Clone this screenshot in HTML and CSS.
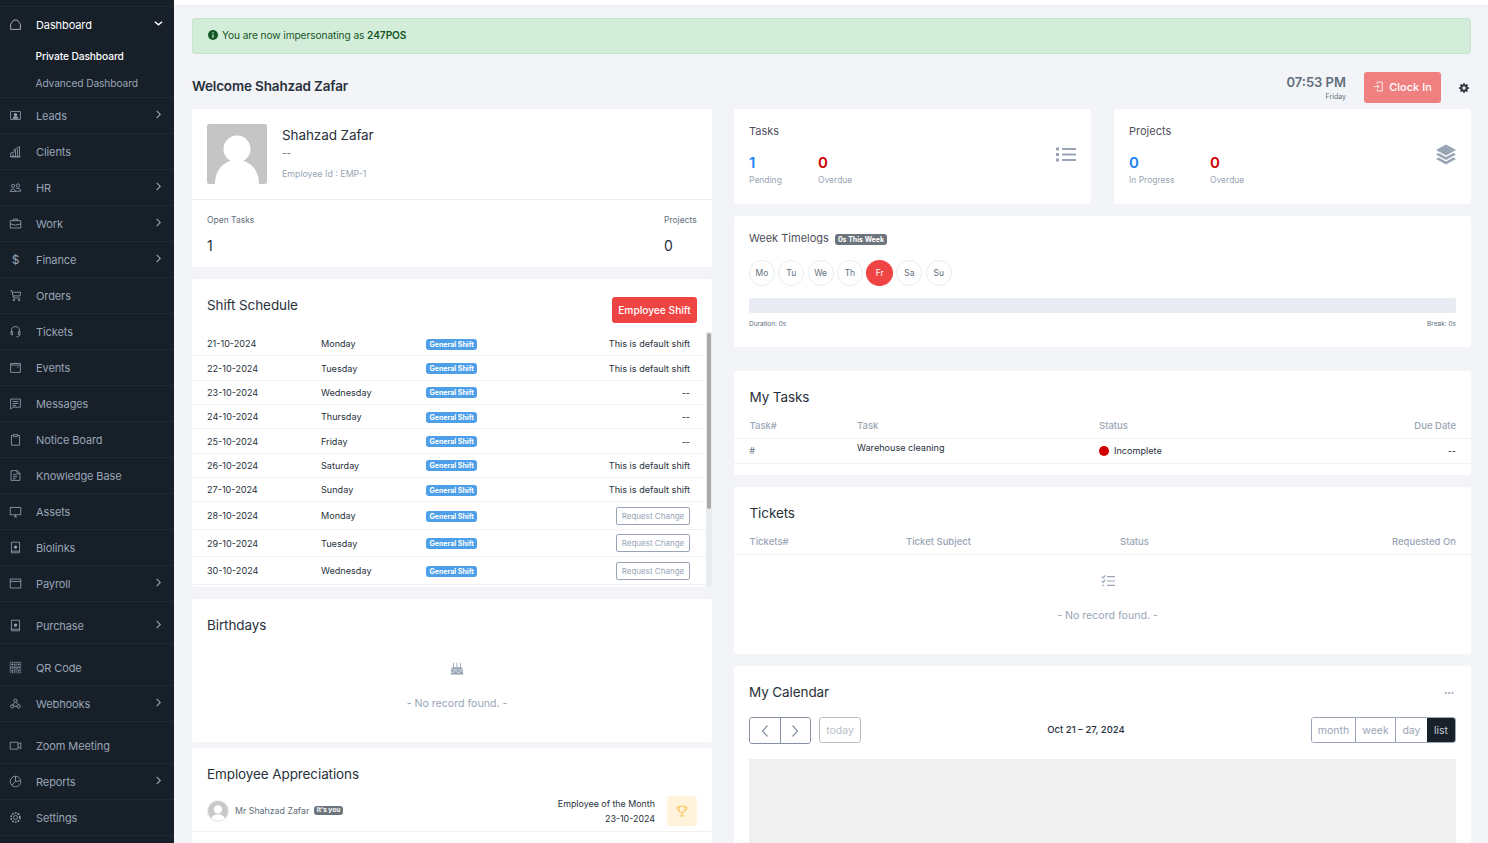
FILE: index.html
```html
<!DOCTYPE html>
<html lang="en">
<head>
<meta charset="utf-8">
<title>Private Dashboard</title>
<link rel="stylesheet" href="styles.css">
</head>
<body>
<div class="app">
  <aside class="sidebar">
    <div class="nav-group">
      <div class="nav-item active"><svg class="ico" viewBox="0 0 16 16"><path d="M2 14V7.500L6 2.500h4l4 5V14H2z"/></svg><span class="nav-label">Dashboard</span><svg class="chev" viewBox="0 0 10 10"><path d="M1 3l4 3.500L9 3"/></svg></div>
      <div class="sub strong">Private Dashboard</div>
      <div class="sub">Advanced Dashboard</div>
    </div>
    <div class="nav-item"><svg class="ico" viewBox="0 0 16 16"><path d="M2 3h12v10H2z"/><circle class="fill" cx="8" cy="7" r="2"/><path class="fill" d="M4.500 12c0-4 7-4 7 0z"/></svg><span class="nav-label">Leads</span><svg class="chev" viewBox="0 0 10 10"><path d="M3 1l4 4-4 4"/></svg></div>
    <div class="nav-item"><svg class="ico" viewBox="0 0 16 16"><path d="M2 14.500V10l4-1V6l7-4v12.500zM2 14.500h12M5 11v3M8 6v8M10.500 5v9"/></svg><span class="nav-label">Clients</span></div>
    <div class="nav-item"><svg class="ico" viewBox="0 0 16 16"><circle cx="5" cy="6" r="2"/><circle cx="11" cy="5.500" r="2"/><path d="M1.500 13c0-4 6.500-4 6.500 0zM8 12.500h6.500c0-3.500-4-4-6-3"/></svg><span class="nav-label">HR</span><svg class="chev" viewBox="0 0 10 10"><path d="M3 1l4 4-4 4"/></svg></div>
    <div class="nav-item"><svg class="ico" viewBox="0 0 16 16"><path d="M1.500 4.500h13v9h-13zM5.500 4.500V2.500h5v2M1.500 8.500L8 10l6.500-1.500"/></svg><span class="nav-label">Work</span><svg class="chev" viewBox="0 0 10 10"><path d="M3 1l4 4-4 4"/></svg></div>
    <div class="nav-item"><span class="ico-text">$</span><span class="nav-label">Finance</span><svg class="chev" viewBox="0 0 10 10"><path d="M3 1l4 4-4 4"/></svg></div>
    <div class="nav-item"><svg class="ico" viewBox="0 0 16 16"><path d="M1.500 2h2l2 9h8M4 4h10.500l-1 4.500H5"/><circle cx="6" cy="13.500" r="1"/><circle cx="12.500" cy="13.500" r="1"/></svg><span class="nav-label">Orders</span></div>
    <div class="nav-item"><svg class="ico" viewBox="0 0 16 16"><path d="M3 9V7a5 5 0 0 1 10 0v2M2.500 8h2v4h-2zM11.500 8h2v4h-2zM13 12c0 2-2 2.500-4 2.500"/></svg><span class="nav-label">Tickets</span></div>
    <div class="nav-item"><svg class="ico" viewBox="0 0 16 16"><path d="M2 3h12v11H2zM2 5h12"/><circle class="fill" cx="11" cy="7.500" r=".8"/></svg><span class="nav-label">Events</span></div>
    <div class="nav-item"><svg class="ico" viewBox="0 0 16 16"><path d="M2 2.500h12v10H4.500L2 15zM4.500 5.500h7M4.500 8h7M4.500 10.500h4"/></svg><span class="nav-label">Messages</span></div>
    <div class="nav-item"><svg class="ico" viewBox="0 0 16 16"><path d="M5.500 3H3v12h10V3h-2.500M5.500 2h5v2.500h-5z"/></svg><span class="nav-label">Notice Board</span></div>
    <div class="nav-item"><svg class="ico" viewBox="0 0 16 16"><path d="M2.500 2h7.500l3.500 3.500V14h-11zM10 2v3.500h3.500M5 7h5M5 9.500h5M5 12h3"/></svg><span class="nav-label">Knowledge Base</span></div>
    <div class="nav-item"><svg class="ico" viewBox="0 0 16 16"><path d="M1.500 3h13v9h-13zM6 14.500h4M8 12v2.500"/></svg><span class="nav-label">Assets</span></div>
    <div class="nav-item"><svg class="ico" viewBox="0 0 16 16"><path d="M3 1.500h10v13H3zM3 12.500h10"/><circle class="fill" cx="8" cy="7.500" r="2"/></svg><span class="nav-label">Biolinks</span></div>
    <div class="nav-item"><svg class="ico" viewBox="0 0 16 16"><path d="M1.500 2.500h13v11h-13zM1.500 5.500h13"/></svg><span class="nav-label">Payroll</span><svg class="chev" viewBox="0 0 10 10"><path d="M3 1l4 4-4 4"/></svg></div>
    <div class="nav-item tall"><svg class="ico" viewBox="0 0 16 16"><path d="M3 1.500h10v13H3zM3 12.500h10"/><circle class="fill" cx="8" cy="7.500" r="2"/></svg><span class="nav-label">Purchase</span><svg class="chev" viewBox="0 0 10 10"><path d="M3 1l4 4-4 4"/></svg></div>
    <div class="nav-item tall"><svg class="ico" viewBox="0 0 16 16"><path class="qr" d="M1.500 1.500h5v5h-5zM9.500 1.500h5v5h-5zM1.500 9.500h5v5h-5zM9.500 9.500h5v5h-5zM7.500 1v14M1 8h14"/><path class="fill" d="M3 3h2v2H3zM11 3h2v2h-2zM3 11h2v2H3zM11 11h2v2h-2z"/></svg><span class="nav-label">QR Code</span></div>
    <div class="nav-item"><svg class="ico" viewBox="0 0 16 16"><circle cx="8" cy="4.500" r="2"/><circle cx="4" cy="11.500" r="2"/><circle cx="12" cy="11.500" r="2"/><path d="M7 6.500l-2.500 4M6 11.500h4M9 6.500l2.500 3"/></svg><span class="nav-label">Webhooks</span><svg class="chev" viewBox="0 0 10 10"><path d="M3 1l4 4-4 4"/></svg></div>
    <div class="nav-item tall"><svg class="ico" viewBox="0 0 16 16"><path d="M1.500 4h9.500v8.500H1.500zM11 7l3.500-2.500v7.500L11 9.500"/></svg><span class="nav-label">Zoom Meeting</span></div>
    <div class="nav-item"><svg class="ico" viewBox="0 0 16 16"><circle cx="8" cy="8" r="6.500"/><path d="M8 1.500V8l5.500-1M8 8l-4.500 4.500"/></svg><span class="nav-label">Reports</span><svg class="chev" viewBox="0 0 10 10"><path d="M3 1l4 4-4 4"/></svg></div>
    <div class="nav-item"><svg class="ico" viewBox="0 0 16 16"><circle cx="8" cy="8" r="2.500"/><circle class="dash" cx="8" cy="8" r="5.500"/></svg><span class="nav-label">Settings</span></div>
  </aside>

  <div class="content">
    <div class="topbar"></div>
    <main class="page">
      <div class="alert"><svg class="alert-ico" viewBox="0 0 16 16"><circle cx="8" cy="8" r="8"/><path d="M7 7h2v5.500H7zM7 3.500h2v2H7z"/></svg><span>You are now impersonating as <b>247POS</b></span></div>

      <div class="head">
        <h1 class="welcome">Welcome Shahzad Zafar</h1>
        <div class="clock"><div class="time">07:53 PM</div><div class="day">Friday</div></div>
        <button class="clock-btn"><svg viewBox="0 0 16 16"><path d="M6 4V1.500h7.500v13H6V12M1 8h7.500M6 5.500L8.800 8 6 10.500"/></svg>Clock In</button>
        <svg class="gear" viewBox="0 0 16 16"><path d="M7 0h2l.5 2.300 1.500.6 2-1.300 1.400 1.400-1.300 2 .6 1.500L16 7v2l-2.300.5-.6 1.500 1.300 2-1.400 1.400-2-1.300-1.500.6L9 16H7l-.5-2.300-1.500-.6-2 1.300-1.400-1.400 1.300-2-.6-1.500L0 9V7l2.300-.5.600-1.500-1.300-2L3 1.600l2 1.300 1.500-.6zM8 5.300a2.700 2.700 0 1 0 0 5.400 2.700 2.700 0 0 0 0-5.400z" fill-rule="evenodd"/></svg>
      </div>

      <div class="cols">
        <div class="col-left">
          <section class="card profile">
            <div class="profile-top">
              <div class="avatar"><svg viewBox="0 0 60 60"><circle cx="30" cy="25" r="13.500"/><path d="M8 60c0-32 44-32 44 0z"/></svg></div>
              <div class="profile-info">
                <div class="pname">Shahzad Zafar</div>
                <div class="pdash">--</div>
                <div class="pid">Employee Id : EMP-1</div>
              </div>
            </div>
            <div class="profile-stats">
              <div><div class="stat-label">Open Tasks</div><div class="stat-num">1</div></div>
              <div class="stat-right"><div class="stat-label">Projects</div><div class="stat-num">0</div></div>
            </div>
          </section>

          <section class="card shift">
            <div class="shift-head"><h3 class="card-title">Shift Schedule</h3><button class="btn-red">Employee Shift</button></div>
            <div class="shift-body">
              <div class="shift-rows">
                <div class="srow"><span>21-10-2024</span><span>Monday</span><span><i class="badge">General Shift</i></span><span class="sr">This is default shift</span></div>
                <div class="srow"><span>22-10-2024</span><span>Tuesday</span><span><i class="badge">General Shift</i></span><span class="sr">This is default shift</span></div>
                <div class="srow"><span>23-10-2024</span><span>Wednesday</span><span><i class="badge">General Shift</i></span><span class="sr">--</span></div>
                <div class="srow"><span>24-10-2024</span><span>Thursday</span><span><i class="badge">General Shift</i></span><span class="sr">--</span></div>
                <div class="srow"><span>25-10-2024</span><span>Friday</span><span><i class="badge">General Shift</i></span><span class="sr">--</span></div>
                <div class="srow"><span>26-10-2024</span><span>Saturday</span><span><i class="badge">General Shift</i></span><span class="sr">This is default shift</span></div>
                <div class="srow"><span>27-10-2024</span><span>Sunday</span><span><i class="badge">General Shift</i></span><span class="sr">This is default shift</span></div>
                <div class="srow tallrow"><span>28-10-2024</span><span>Monday</span><span><i class="badge">General Shift</i></span><span class="sr"><button class="req">Request Change</button></span></div>
                <div class="srow tallrow"><span>29-10-2024</span><span>Tuesday</span><span><i class="badge">General Shift</i></span><span class="sr"><button class="req">Request Change</button></span></div>
                <div class="srow tallrow"><span>30-10-2024</span><span>Wednesday</span><span><i class="badge">General Shift</i></span><span class="sr"><button class="req">Request Change</button></span></div>
              </div>
              <div class="track"><div class="thumb"></div></div>
            </div>
          </section>

          <section class="card birthdays">
            <h3 class="card-title">Birthdays</h3>
            <div class="empty">
              <svg class="empty-ico cake" viewBox="0 0 16 16"><path d="M1 9.500h14v6H1z"/><path d="M3.500 2h1v5h-1zM7.500 2h1v5h-1zM11.500 2h1v5h-1zM2 7h12v2H2z"/><path class="wave" d="M1 12c1.500 1.500 2.300 1.500 3.500 0s2.300-1.500 3.500 0 2.300 1.500 3.500 0 2.300-1.500 3.500 0"/></svg>
              <div class="empty-text">- No record found. -</div>
            </div>
          </section>

          <section class="card apprec">
            <h3 class="card-title">Employee Appreciations</h3>
            <div class="apprec-row">
              <div class="mini"><svg viewBox="0 0 24 24"><circle cx="12" cy="10" r="5"/><path d="M3 24c0-11 18-11 18 0z"/></svg></div>
              <span class="apprec-name">Mr Shahzad Zafar</span>
              <i class="badge-dark">It's you</i>
              <div class="apprec-right"><div>Employee of the Month</div><div>23-10-2024</div></div>
              <div class="trophy"><svg viewBox="0 0 16 16"><path d="M4 1.500h8V6a4 4 0 0 1-8 0zM4 3H1.500c0 3 1 4.500 3 5M12 3h2.500c0 3-1 4.500-3 5M8 10v3M5 14.500h6"/></svg></div>
            </div>
          </section>
        </div>

        <div class="col-right">
          <div class="stats-grid">
            <section class="card mini-card">
              <div class="mini-main">
                <div class="mini-title">Tasks</div>
                <div class="mini-nums">
                  <div class="num-a"><div class="num blue">1</div><div class="num-label">Pending</div></div>
                  <div><div class="num red">0</div><div class="num-label">Overdue</div></div>
                </div>
              </div>
              <svg class="mini-ico" viewBox="0 0 20 16"><path d="M0 1h3v3H0zM6 1.500h14v2H6zM0 6.500h3v3H0zM6 7h14v2H6zM0 12h3v3H0zM6 12.500h14v2H6z"/></svg>
            </section>
            <section class="card mini-card">
              <div class="mini-main">
                <div class="mini-title">Projects</div>
                <div class="mini-nums">
                  <div class="num-b"><div class="num blue">0</div><div class="num-label">In Progress</div></div>
                  <div><div class="num red">0</div><div class="num-label">Overdue</div></div>
                </div>
              </div>
              <svg class="mini-ico" viewBox="0 0 20 20"><path d="M10 0l10 5.500-10 5.500L0 5.500z"/><path d="M2.500 8.500L10 12.500l7.500-4L20 10l-10 5.500L0 10z"/><path d="M2.500 13L10 17l7.500-4L20 14.500 10 20 0 14.500z"/></svg>
            </section>
          </div>

          <section class="card week">
            <div class="week-title"><span>Week Timelogs</span><i class="badge-dark big">0s This Week</i></div>
            <div class="days">
              <span class="dayc">Mo</span><span class="dayc">Tu</span><span class="dayc">We</span><span class="dayc">Th</span><span class="dayc on">Fr</span><span class="dayc">Sa</span><span class="dayc">Su</span>
            </div>
            <div class="bar"></div>
            <div class="bar-labels"><span>Duration: 0s</span><span>Break: 0s</span></div>
          </section>

          <section class="card tasks">
            <h3 class="card-title">My Tasks</h3>
            <div class="thead tcols"><span>Task#</span><span>Task</span><span>Status</span><span class="sr">Due Date</span></div>
            <div class="trow tcols"><span class="muted">#</span><span class="up">Warehouse cleaning</span><span class="status"><i class="dot"></i>Incomplete</span><span class="sr">--</span></div>
          </section>

          <section class="card tickets">
            <h3 class="card-title">Tickets</h3>
            <div class="thead kcols"><span>Tickets#</span><span>Ticket Subject</span><span>Status</span><span class="sr">Requested On</span></div>
            <div class="empty tight">
              <svg class="empty-ico list" viewBox="0 0 16 16"><path d="M1 3l1.500 1.500L5 1.500M1 8l1.500 1.500L5 6.500M7 3h9M7 8h9M7 13h9M1.500 13h2"/></svg>
              <div class="empty-text">- No record found. -</div>
            </div>
          </section>

          <section class="card calendar">
            <div class="cal-head"><h3 class="card-title">My Calendar</h3><span class="dots">•••</span></div>
            <div class="cal-bar">
              <div class="cal-left">
                <div class="navbtns"><button><svg viewBox="0 0 10 14"><path d="M7.500 1.500L2.500 7l5 5.500"/></svg></button><button><svg viewBox="0 0 10 14"><path d="M2.500 1.500L7.500 7l-5 5.500"/></svg></button></div>
                <button class="today">today</button>
              </div>
              <div class="cal-range">Oct 21 – 27, 2024</div>
              <div class="views"><button>month</button><button>week</button><button>day</button><button class="sel">list</button></div>
            </div>
            <div class="cal-body"></div>
          </section>
        </div>
      </div>
    </main>
  </div>
</div>
</body>
</html>
```

FILE: styles.css
```css
* { box-sizing: border-box; }
html, body { margin: 0; height: 100%; overflow: hidden; }
body { font-family: Inter, "Liberation Sans", sans-serif; background: #f2f4f7; color: #28313c; font-size: 12px; }
button { font-family: inherit; cursor: pointer; }
h1, h3 { margin: 0; font-weight: 400; }
.app { display: flex; height: 843px; overflow: hidden; }

/* sidebar */
.sidebar { width: 174px; flex: none; background: #171f29; padding-top: 6px; }
.nav-group { border-top: 1px solid #1f2935; border-bottom: 1px solid #1f2935; height: 92px; }
.nav-item { display: flex; align-items: center; height: 36px; padding: 0 11px 0 9px; border-bottom: 1px solid #1f2935; color: #99a5b5; font-size: 11px; letter-spacing: -.1px; }
.nav-item.tall { height: 42px; padding-top: 6px; }
.nav-item.active { color: #fff; border-bottom: 0; height: 35px; }
.ico { width: 13px; height: 13px; flex: none; fill: none; stroke: #99a5b5; stroke-width: 1; margin-right: 14px; }
.ico .fill { fill: #99a5b5; stroke: none; }
.ico .qr { stroke-dasharray: 1.5 .8; }
.ico .dash { stroke-width: 2; stroke-dasharray: 2 1.500; }
.active .ico { stroke: #c5ccd6; }
.ico-text { width: 13px; margin-right: 14px; text-align: center; font-size: 12px; flex: none; }
.nav-label { flex: 1; }
.chev { width: 9px; height: 9px; fill: none; stroke: #99a5b5; stroke-width: 1.200; flex: none; position: relative; top: -1px; }
.active .chev { stroke: #fff; stroke-width: 1.600; }
.sub { height: 27px; padding-left: 35.500px; display: flex; align-items: center; font-size: 10.200px; letter-spacing: -.1px; color: #99a5b5; }
.sub.strong { color: #fff; font-weight: 500; }

/* main */
.content { flex: 1; min-width: 0; }
.topbar { height: 6px; background: #fff; border-bottom: 1px solid #e8eef3; }
.page { padding: 12px 17px 0 18px; }
.alert { height: 36px; display: flex; align-items: center; gap: 4px; padding: 0 0 2px 15px; background: #d4edda; border: 1px solid #c3e6cb; border-radius: 3px; color: #155724; font-size: 10.200px; letter-spacing: -.1px; }
.alert b { font-weight: 600; }
.alert-ico { width: 10px; height: 10px; fill: #155724; fill-rule: evenodd; }
.alert-ico path { fill: #d4edda; }
.head { display: flex; align-items: center; height: 31px; margin: 18px 0 6px; }
.welcome { flex: 1; font-size: 13.500px; font-weight: 600; letter-spacing: -.15px; position: relative; top: -2px; color: #28313c; }
.clock { text-align: right; margin-right: 18px; position: relative; top: -1px; }
.time { font-size: 13px; font-weight: 600; color: #616e7c; line-height: 20px; }
.day { font-size: 7px; color: #616e7c; line-height: 10px; }
.clock-btn { width: 77px; height: 31px; border: 0; border-radius: 3px; background: #f08080; color: #fff; font-size: 11px; font-weight: 500; display: flex; align-items: center; justify-content: center; gap: 5px; padding: 0 0 2px; }
.clock-btn svg { width: 11px; height: 11px; fill: none; stroke: #fff; stroke-width: 1.200; }
.gear { width: 10px; height: 10px; fill: #28313c; margin: 0 2px 0 18px; }

.cols { display: grid; grid-template-columns: 520px 737px; column-gap: 22px; }
.card { background: #fff; border-radius: 3px; }
.card-title { font-size: 13.500px; letter-spacing: -.1px; color: #28313c; line-height: 18px; }
.col-left .card, .col-right > .card, .stats-grid { margin-bottom: 12px; }
.col-right > .week.card { margin-bottom: 24px; }
.birthdays.card { margin-bottom: 6px; }

/* profile */
.profile-top { display: flex; padding: 15px; height: 91px; border-bottom: 1px solid #e8eef3; }
.avatar { width: 60px; height: 60px; background: #c5c5c5; border-radius: 2px; overflow: hidden; margin-right: 15px; }
.avatar svg { display: block; fill: #fff; }
.pname { font-size: 13.500px; letter-spacing: -.1px; line-height: 18px; margin-top: 2px; }
.pdash { font-size: 10px; line-height: 14px; color: #616e7c; margin-top: 2px; }
.pid { font-size: 8.800px; line-height: 12px; color: #99a5b5; margin-top: 8px; }
.profile-stats { height: 67px; display: flex; justify-content: space-between; padding: 15px; }
.stat-label { font-size: 8.500px; color: #616e7c; line-height: 10px; }
.stat-num { font-size: 14px; line-height: 18px; margin-top: 12px; }
.stat-right { width: 33px; }

/* shift */
.shift { height: 308px; overflow: hidden; }
.shift-head { display: flex; justify-content: space-between; height: 53px; padding: 17px 15px 0; }
.btn-red { width: 85px; height: 26px; margin-top: 1px; border: 0; border-radius: 3px; background: #ef4444; color: #fff; font-size: 10.200px; font-weight: 500; padding: 0; }
.shift-body { display: flex; height: 255px; }
.shift-rows { flex: 1; min-width: 0; }
.srow { display: grid; grid-template-columns: 114px 105px 1fr auto; align-items: center; height: 24.350px; padding: 0 15.500px 0 15px; border-bottom: 1px solid #f1f1f1; font-size: 9.100px; color: #28313c; }
.srow.tallrow { height: 27.500px; }
.sr { text-align: right; }
.badge { display: inline-block; font-style: normal; font-weight: 700; font-size: 7px; line-height: 11px; color: #fff; background: #4d9fe8; border-radius: 3px; padding: 0 3.500px; vertical-align: middle; }
.req { height: 18px; width: 74px; padding: 0; border: 1px solid #99a5b5; border-radius: 2px; background: #fff; color: #99a5b5; font-size: 8px; display: block; margin-left: auto; }
.track { width: 6.500px; background: #e9ecef; padding: 1px 1.500px; height: 100%; }
.thumb { height: 176px; background: #a9a9a9; border-radius: 2px; }

/* birthdays */
.birthdays { height: 143px; padding: 17px 15px 0; }
.empty { text-align: center; padding: 26px 0 0 10px; }
.empty-ico { display: block; margin: 0 auto; width: 14px; height: 16px; }
.cake { fill: #99a5b5; }
.cake .wave { fill: none; stroke: #fff; stroke-width: .8; }
.empty-text { color: #99a5b5; font-size: 10.600px; margin-top: 21px; line-height: 14px; }

/* appreciations */
.apprec { padding: 17px 15px 0; height: 110px; }
.apprec-row { display: flex; align-items: center; height: 42px; margin: 7px -15px 0; padding: 0 15px; border-bottom: 1px solid #f1f1f1; }
.mini { width: 22px; height: 22px; border-radius: 50%; background: #c8c8c8; border: 1px solid #eee; overflow: hidden; flex: none; margin-right: 6px; }
.mini svg { display: block; fill: #fff; }
.apprec-name { font-size: 8.800px; color: #616e7c; }
.badge-dark { display: inline-block; margin-left: 5px; font-style: normal; font-weight: 700; font-size: 6.500px; line-height: 9px; color: #fff; background: #6c757d; border-radius: 3px; padding: 0 2.500px; }
.apprec-right { margin-left: auto; text-align: right; font-size: 8.900px; color: #28313c; line-height: 15px; }
.trophy { width: 30px; height: 30px; margin-left: 12px; background: #fff3dc; border-radius: 3px; display: flex; align-items: center; justify-content: center; }
.trophy svg { width: 12px; height: 12px; fill: none; stroke: #fcbd4a; stroke-width: 1.200; }

/* right */
.stats-grid { display: grid; grid-template-columns: 357px 357px; column-gap: 23px; }
.mini-card { height: 95px; display: flex; justify-content: space-between; padding: 15px; }
.mini-title { font-size: 11px; line-height: 14px; color: #4d4f5c; }
.mini-nums { display: flex; margin-top: 15px; }
.num-a { width: 69px; }
.num-b { width: 81px; }
.num { font-size: 15px; font-weight: 600; line-height: 20px; }
.num.blue { color: #1d82f5; }
.num.red { color: #d30000; }
.num-label { font-size: 8.500px; color: #99a5b5; line-height: 12px; margin-top: 1px; }
.mini-ico { width: 20px; height: 21px; fill: #99a5b5; margin-top: 20px; }

.week { height: 131px; padding: 15px; }
.week-title { display: flex; align-items: center; font-size: 11px; line-height: 14px; color: #4d4f5c; }
.badge-dark.big { font-size: 7px; line-height: 11px; padding: 0 3px; margin-left: 6px; position: relative; top: 1px; }
.days { display: flex; gap: 3.300px; margin-top: 15px; }
.dayc { width: 26px; height: 26px; border-radius: 50%; border: 1px solid #e8eef3; display: flex; align-items: center; justify-content: center; font-size: 8.500px; color: #616e7c; flex: none; }
.dayc.on { background: #ef4444; border-color: #ef4444; color: #fff; width: 27px; }
.bar { height: 15px; margin-top: 12px; background: #e8ecf2; border-radius: 2px; }
.bar-labels { display: flex; justify-content: space-between; font-size: 6.500px; color: #616e7c; margin-top: 6px; line-height: 10px; }

.tasks { height: 104px; padding: 17px 0 0; }
.tasks .card-title, .tickets .card-title, .cal-head .card-title { padding-left: 15.500px; }
.thead { height: 27px; margin-top: 6px; display: grid; align-items: center; padding: 0 15px 0 15.500px; font-size: 9.500px; color: #99a5b5; border-bottom: 1px solid #f1f1f1; font-weight: 500; }
.trow { display: grid; align-items: center; height: 25px; padding: 0 15px 1px 15.500px; border-bottom: 1px solid #f1f1f1; font-size: 9.100px; color: #28313c; }
.muted { color: #616e7c; font-size: 8.500px; }
.tcols { grid-template-columns: 107.500px 242px 1fr 100px; }
.up { position: relative; top: -3px; }
.status { display: flex; align-items: center; gap: 5px; }
.dot { width: 10px; height: 10px; border-radius: 50%; background: #d30000; }

.tickets { height: 167px; padding: 17px 0 0; }
.kcols { grid-template-columns: 156.500px 214px 1fr 100px; }
.empty.tight { padding-top: 19px; }
.empty-ico.list { width: 16px; height: 14px; fill: none; stroke: #99a5b5; stroke-width: 1.300; }
.empty.tight .empty-text { margin-top: 21px; }

.calendar { padding: 17px 15px 0; height: 200px; }
.cal-head { display: flex; justify-content: space-between; align-items: center; margin-left: -15.500px; }
.dots { font-size: 6px; color: #7f8b9b; margin-right: 2px; }
.cal-bar { display: flex; justify-content: space-between; align-items: flex-start; margin-top: 16px; }
.cal-left { display: flex; gap: 8px; }
.navbtns { display: flex; width: 62px; height: 27px; border: 1px solid #8591a1; border-radius: 3px; overflow: hidden; }
.navbtns button { flex: 1; border: 0; background: #fff; padding: 0; }
.navbtns button + button { border-left: 1px solid #8591a1; }
.navbtns svg { width: 10px; height: 14px; fill: none; stroke: #8591a1; stroke-width: 1.200; display: block; margin: 0 auto; }
.today { width: 42px; height: 26px; padding: 0; background: #fff; border: 1px solid #b9bfc9; border-radius: 3px; color: #b9bfc9; font-size: 10.500px; }
.cal-range { font-size: 9.500px; font-weight: 500; color: #28313c; line-height: 26px; }
.views { display: flex; height: 26px; border: 1px solid #99a5b5; border-radius: 3px; overflow: hidden; }
.views button { background: #fff; border: 0; border-right: 1px solid #99a5b5; color: #99a5b5; font-size: 10.500px; padding: 0; width: 40px; }
.views button:first-child { width: 44px; }
.views button:nth-child(3) { width: 31px; border-right: 0; }
.views button.sel { width: 28px; background: #171f29; color: #c5ccd6; border: 0; }
.cal-body { height: 100px; margin-top: 15px; background: #f0f0f0; }
```
